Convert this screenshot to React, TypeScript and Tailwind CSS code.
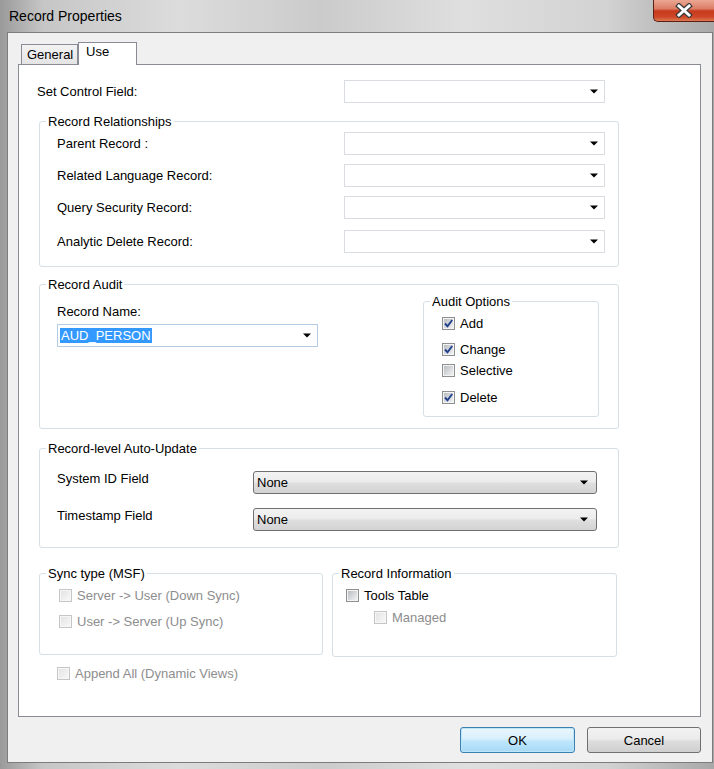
// Record Properties dialog (Windows 7 style), "Use" tab
import type { ReactNode } from 'react';

const font = "font-['Liberation_Sans',Arial,sans-serif]";

function Arrow() {
  return (
    <svg width="8" height="5" viewBox="0 0 8 5" className="shrink-0">
      <path d="M0 0.5h8L4 4.5z" fill="#000" />
    </svg>
  );
}

function Combo({ value, selected, focused }: { value?: string; selected?: boolean; focused?: boolean }) {
  return (
    <div
      className={`flex h-[23px] w-[261px] items-center justify-between border bg-white pl-[2px] pr-[6px] ${
        focused ? 'border-[#b3cbe4]' : 'border-[#d9dce0]'
      }`}
    >
      {value ? (
        <span className={`px-[1px] text-[13px] leading-[15px] ${selected ? 'bg-[#3399ff] text-white' : 'text-black'}`}>
          {value}
        </span>
      ) : (
        <span />
      )}
      <Arrow />
    </div>
  );
}

function DropList({ value }: { value: string }) {
  return (
    <div className="flex h-[23px] w-[344px] items-center justify-between rounded-[3px] border border-[#707070] bg-[linear-gradient(#f3f3f3,#ececec_45%,#dedede_55%,#d3d3d3)] pl-[3px] pr-[8px]">
      <span className="text-[13px] leading-[15px] text-black">{value}</span>
      <Arrow />
    </div>
  );
}

function Check({
  label,
  checked,
  disabled,
  className = '',
}: {
  label: string;
  checked?: boolean;
  disabled?: boolean;
  className?: string;
}) {
  return (
    <div className={`flex h-[15px] items-center ${className}`}>
      <span
        className={`flex h-[13px] w-[13px] shrink-0 border p-[1px] ${
          disabled ? 'border-[#c6c6c6] bg-[#f6f6f6]' : 'border-[#8e8f8f] bg-[#f4f4f4]'
        }`}
      >
        <span
          className={`relative flex h-full w-full items-center justify-center ${
            disabled
              ? 'bg-[linear-gradient(135deg,#e4e4e4,#f7f7f7)]'
              : 'bg-[linear-gradient(135deg,#b9bdc3,#f1f1f1)]'
          }`}
        >
          {checked && (
            <svg width="11" height="11" viewBox="0 0 11 11" className="absolute -left-[1px] -top-[1px]">
              <path d="M2 5.5 L4.5 8.2 L9.2 2" fill="none" stroke="#21408a" strokeWidth="1.9" />
            </svg>
          )}
        </span>
      </span>
      <span className={`ml-[5px] text-[13px] leading-[15px] ${disabled ? 'text-[#8d8d8d]' : 'text-black'}`}>
        {label}
      </span>
    </div>
  );
}

function Group({
  title,
  className,
  inner = '',
  children,
}: {
  title: string;
  className: string;
  inner?: string;
  children: ReactNode;
}) {
  return (
    <fieldset className={`rounded-[3px] border border-[#d5dfe5] ${className}`}>
      <legend className="ml-[6px] px-[2px] text-[13px] leading-[15px] text-black">{title}</legend>
      <div className={inner}>{children}</div>
    </fieldset>
  );
}

function Row({ label, labelWidth, children, className = '' }: { label: string; labelWidth: string; children: ReactNode; className?: string }) {
  return (
    <div className={`flex items-center ${className}`}>
      <span className={`${labelWidth} text-[13px] leading-[15px] text-black`}>{label}</span>
      {children}
    </div>
  );
}

export default function App() {
  return (
    <div
      className={`${font} h-[769px] w-[714px] overflow-hidden bg-[linear-gradient(90deg,#9a9a9a_0%,#c6c6c6_6%,#dcdcdc_25%,#cbcbcb_45%,#dfdfdf_65%,#d2d2d2_85%,#a8a8a8_100%)]`}
    >
      {/* Title bar */}
      <div className="flex h-[32px] items-start">
        <span className="pl-[9px] pt-[8px] text-[14px] leading-[16px] text-black">Record Properties</span>
        <button className="ml-auto flex h-[22px] w-[61px] items-center justify-center rounded-bl-[5px] border border-t-0 border-r-0 border-[#5b1f14] bg-[linear-gradient(#eaa793,#dc7c64_42%,#c73a1e_52%,#cd4628_80%,#dd7a50)]">
          <svg width="18" height="15" viewBox="0 0 18 15">
            <path d="M4 3 L14 12 M14 3 L4 12" stroke="#3b3b3b" strokeWidth="5.4" strokeLinecap="square" />
            <path d="M4 3 L14 12 M14 3 L4 12" stroke="#ffffff" strokeWidth="3" strokeLinecap="square" />
          </svg>
        </button>
      </div>

      {/* Client area */}
      <div className="ml-[7px] h-[731px] w-[706px] border border-[#7c7c7c] bg-[#f0f0f0] pl-[10px] pt-[9px]">
        {/* Tabs */}
        <div className="flex h-[23px] items-start">
          <div className="ml-[3px] mt-[2px] flex h-[20px] w-[57px] items-center border border-b-0 border-[#898c95] bg-[linear-gradient(#f3f3f3,#e4e4e4)] pl-[5px] text-[13px] leading-[15px] text-black">
            General
          </div>
          <div className="relative z-10 h-[23px] w-[59px] border border-b-0 border-[#898c95] bg-white pl-[7px] pt-[1px] text-[13px] leading-[15px] text-black">
            Use
          </div>
        </div>

        {/* Tab panel */}
        <div className="-mt-[1px] h-[653px] w-[683px] border border-[#898c95] bg-white pt-[15px]">
          <Row label="Set Control Field:" labelWidth="w-[325px] pl-[18px]">
            <Combo />
          </Row>

          <Group title="Record Relationships" className="ml-[20px] mt-[11px] h-[153px] w-[580px]" inner="pt-[3px]">
            <Row label="Parent Record :" labelWidth="w-[304px] pl-[17px]">
              <Combo />
            </Row>
            <Row label="Related Language Record:" labelWidth="w-[304px] pl-[17px]" className="mt-[9px]">
              <Combo />
            </Row>
            <Row label="Query Security Record:" labelWidth="w-[304px] pl-[17px]" className="mt-[9px]">
              <Combo />
            </Row>
            <Row label="Analytic Delete Record:" labelWidth="w-[304px] pl-[17px]" className="mt-[11px]">
              <Combo />
            </Row>
          </Group>

          <Group title="Record Audit" className="ml-[20px] mt-[10px] h-[152px] w-[580px]" inner="flex items-start">
            <div className="w-[383px] pl-[17px]">
              <div className="mt-[12px] text-[13px] leading-[15px] text-black">Record Name:</div>
              <div className="mt-[5px]">
                <Combo value="AUD_PERSON" selected focused />
              </div>
            </div>
            <Group title="Audit Options" className="mt-[2px] h-[123px] w-[176px]" inner="pl-[18px] pt-[7px]">
              <Check label="Add" checked />
              <Check label="Change" checked className="mt-[11px]" />
              <Check label="Selective" className="mt-[6px]" />
              <Check label="Delete" checked className="mt-[12px]" />
            </Group>
          </Group>

          <Group title="Record-level Auto-Update" className="ml-[20px] mt-[12px] h-[107px] w-[580px]" inner="pl-[17px]">
            <div className="mt-[15px] flex items-start">
              <span className="w-[196px] text-[13px] leading-[15px] text-black">System ID Field</span>
              <DropList value="None" />
            </div>
            <div className="mt-[14px] flex items-start">
              <span className="w-[196px] text-[13px] leading-[15px] text-black">Timestamp Field</span>
              <DropList value="None" />
            </div>
          </Group>

          <div className="ml-[20px] mt-[18px] flex items-start gap-[9px]">
            <Group title="Sync type (MSF)" className="h-[89px] w-[284px]" inner="pl-[19px] pt-[7px]">
              <Check label="Server -> User (Down Sync)" disabled />
              <Check label="User -> Server (Up Sync)" disabled className="mt-[11px]" />
            </Group>
            <Group title="Record Information" className="h-[91px] w-[285px]" inner="pl-[13px] pt-[7px]">
              <Check label="Tools Table" />
              <Check label="Managed" disabled className="ml-[28px] mt-[7px]" />
            </Group>
          </div>

          <Check label="Append All (Dynamic Views)" disabled className="ml-[38px] mt-[9px]" />
        </div>

        {/* Buttons */}
        <div className="mt-[10px] flex w-[683px] justify-end gap-[12px]">
          <button className="h-[26px] w-[115px] rounded-[3px] border border-[#3c7fb1] bg-[linear-gradient(#eaf6fd,#d9f0fc_45%,#bee6fd_55%,#a7d9f5)] text-[13px] leading-[15px] text-black shadow-[inset_0_0_0_1px_#bfe5f8]">
            OK
          </button>
          <button className="h-[26px] w-[114px] rounded-[3px] border border-[#707070] bg-[linear-gradient(#f2f2f2,#ebebeb_45%,#dddddd_55%,#cfcfcf)] text-[13px] leading-[15px] text-black">
            Cancel
          </button>
        </div>
      </div>
    </div>
  );
}
